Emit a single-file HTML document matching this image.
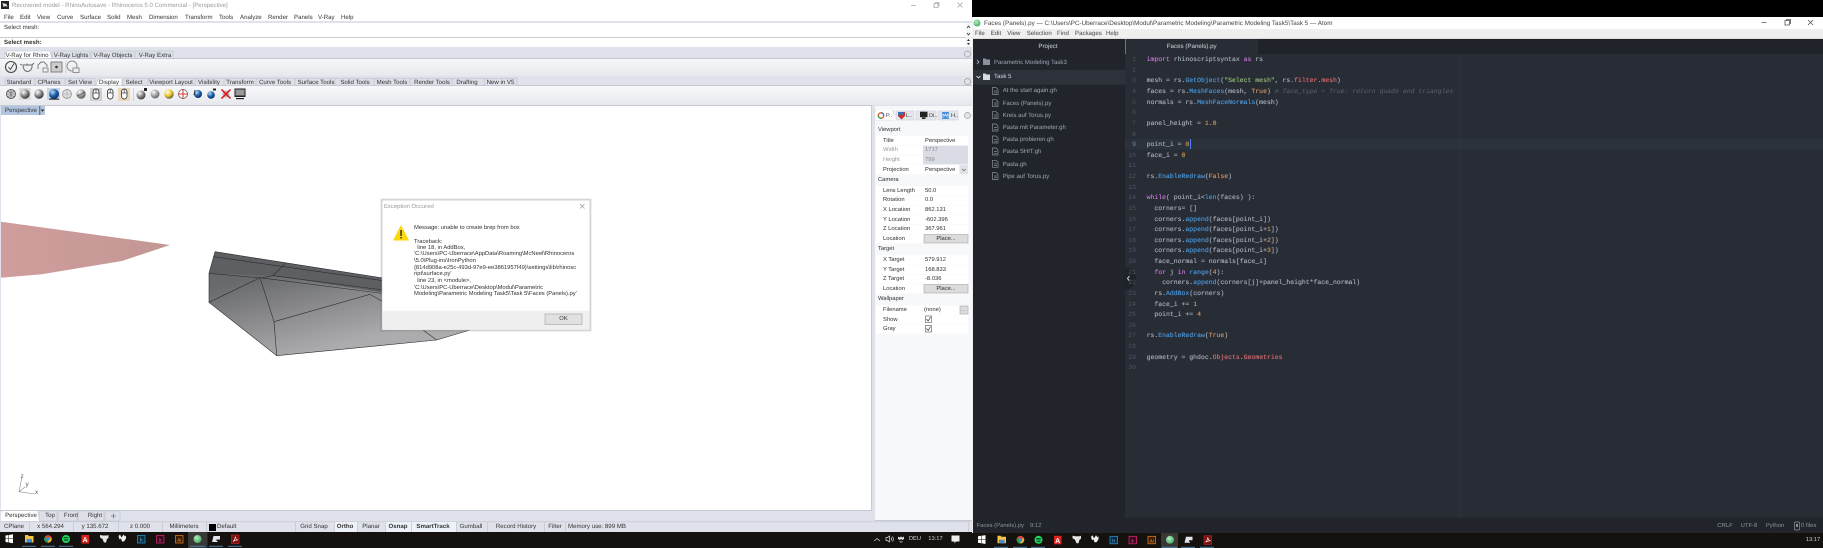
<!DOCTYPE html>
<html><head><meta charset="utf-8"><title>Rhino and Atom</title>
<style>
html,body{margin:0;padding:0;background:#000}
#r{position:relative;width:1823px;height:548px;overflow:hidden;filter:blur(.3px);font-family:"Liberation Sans",sans-serif;text-rendering:geometricPrecision;color:#333}
svg{position:absolute;left:0;top:0}
.t{position:absolute;white-space:nowrap;font-size:6.1px;line-height:8px;height:8px}
.c{transform:translateX(-50%)}
.b{font-weight:bold}
.w{color:#cfd3da}
.s{color:#9da5b4;font-size:6.05px}
.st{color:#8a919e;font-size:5.9px}
pre{position:absolute;margin:0;font-family:"Liberation Mono",monospace;font-size:6.47px;line-height:10.63px;color:#abb2bf;-webkit-text-stroke:.12px}
#ln{left:1122px;width:14px;text-align:right;top:55.2px;color:#4b5263;-webkit-text-stroke:0}
#code{left:1146.6px;top:55.2px}
.k{color:#c678dd}.f{color:#4a9ee6}.g{color:#98c379}.o{color:#d19a66}.e{color:#e06c75}.m{color:#5c6370;font-style:italic;-webkit-text-stroke:0}
</style></head><body><div id="r">
<svg width="1823" height="548" viewBox="0 0 1823 548" xmlns="http://www.w3.org/2000/svg">
<defs>
<linearGradient id="tb" x1="0" y1="0" x2="0" y2="1"><stop offset="0" stop-color="#f7f8fa"/><stop offset="1" stop-color="#e6e8ed"/></linearGradient>
<linearGradient id="pk" x1="0" y1="0" x2="1" y2="0"><stop offset="0" stop-color="#d09d9c"/><stop offset="1" stop-color="#c29794"/></linearGradient>
<linearGradient id="gr" gradientUnits="userSpaceOnUse" x1="280" y1="270" x2="300" y2="355"><stop offset="0" stop-color="#68696c"/><stop offset="1" stop-color="#acacae"/></linearGradient>
<radialGradient id="sp" cx=".35" cy=".3" r=".8"><stop offset="0" stop-color="#fff"/><stop offset=".5" stop-color="#888"/><stop offset="1" stop-color="#222"/></radialGradient>
<radialGradient id="sb" cx=".35" cy=".3" r=".8"><stop offset="0" stop-color="#bde"/><stop offset=".5" stop-color="#1d60b0"/><stop offset="1" stop-color="#062050"/></radialGradient>
<radialGradient id="sy" cx=".35" cy=".3" r=".8"><stop offset="0" stop-color="#fff"/><stop offset=".5" stop-color="#f3c92a"/><stop offset="1" stop-color="#444"/></radialGradient>
<radialGradient id="sg" cx=".4" cy=".35" r=".7"><stop offset="0" stop-color="#b5ecc0"/><stop offset="1" stop-color="#3fa85f"/></radialGradient>
</defs>

<!-- Rhino window -->
<rect x="0" y="0" width="972" height="548" fill="#fff"/>
<rect x="0" y="21" width="972" height="2" fill="#dfe2ea"/>
<rect x="3" y="23" width="963" height="14" fill="#fff"/>
<rect x="0" y="37" width="972" height="1" fill="#c9ccd4"/>
<rect x="0" y="47" width="972" height="11" fill="#dfe2ea"/>
<rect x="0" y="58" width="972" height="18" fill="url(#tb)"/>
<rect x="0" y="58" width="972" height="1" fill="#c4c8d2"/>
<rect x="0" y="76" width="972" height="10" fill="#dfe2ea"/>
<rect x="0" y="85" width="972" height="1" fill="#c4c8d2"/>
<rect x="0" y="86" width="972" height="19" fill="url(#tb)"/>
<rect x="0" y="105" width="972" height="427" fill="#dfe2ea"/>
<rect x="1" y="106" width="870" height="404" fill="#fff"/>
<rect x="871" y="106" width="1" height="405" fill="#c6cad3"/>
<rect x="0" y="510" width="872" height="1" fill="#c6cad3"/>
<rect x="0" y="105" width="872" height="1" fill="#c6cad3"/>
<rect x="875" y="106" width="97" height="414" fill="#f7f8fa"/>
<rect x="875" y="520" width="97" height="1" fill="#c6cad3"/>
<rect x="966" y="23" width="5" height="24" fill="#f4f5f7"/>
<path d="M967 28l1.5-2 1.5 2M967 33l1.5 2 1.5-2" fill="none" stroke="#333" stroke-width=".7"/>
<path d="M967 41l1.5-2 1.5 2zM967 43l1.5 2 1.5-2z" fill="#333"/>

<!-- Rhino logo + window controls -->
<rect x="1" y="1" width="8" height="8" fill="#222"/><path d="M2.500 3l4 1 1 3-2-1-2 1z" fill="#ddd"/>
<g fill="none" stroke="#aaa" stroke-width=".8">
<path d="M911 5.500h5M934 3.500h4v4h-4zM935.500 3.500v-1h3.500v3.500h-1"/><path d="M957.500 2.500l5 5M962.500 2.500l-5 5"/>
</g>

<!-- tabs row 1 -->
<g fill="#dde0e8" stroke="#bcc0ca" stroke-width=".6">
<path d="M52 58.500v-6l2-1.500h36v7.500zM91 58.500v-6l2-1.500h42v7.500zM135 58.500v-6l2-1.500h36v7.500z"/>
<path d="M5 58.500v-6l2-1.500h43l2 7.500z" fill="#fff"/>
</g>
<!-- tabs row 2 -->
<g fill="#dde0e8" stroke="#bcc0ca" stroke-width=".6">
<path d="M5 85.700v-6l2-1.500h28v7.500zM35 85.700v-6l2-1.500h28v7.500zM65 85.700v-6l2-1.500h28v7.500zM123 85.700v-6l2-1.500h23v7.500zM148 85.700v-6l2-1.500h45v7.500zM195 85.700v-6l2-1.500h27v7.500zM224 85.700v-6l2-1.500h30v7.500zM256 85.700v-6l2-1.500h37v7.500zM295 85.700v-6l2-1.500h38v7.500zM335 85.700v-6l2-1.500h37v7.500zM374 85.700v-6l2-1.500h34v7.500zM410 85.700v-6l2-1.500h40v7.500zM452 85.700v-6l2-1.500h30v7.500zM484 85.700v-6l2-1.500h31v7.500z"/>
<path d="M96 85.700l2-6 2-1.500h22v7.500z" fill="#fff"/>
</g>
<!-- gear icons -->
<g fill="#e2e4e9" stroke="#9a9da5" stroke-width=".7"><circle cx="967.500" cy="54" r="3"/><circle cx="967.500" cy="81.500" r="3"/><circle cx="967.500" cy="115.500" r="3"/></g>

<!-- toolbar row 1 icons -->
<g fill="none" stroke="#444" stroke-width=".9">
<circle cx="11" cy="67" r="5.500" stroke-width="1.100"/><path d="M8.500 67l2 2.500 3.500-6"/>
<path d="M23 65h9c.5 4-2 6.500-4.500 6.500S23 69 23 65zM22 65l-2-1M32 65l2-2M27 63.500v1.500" stroke="#666"/>
<path d="M38 69v-4l3-3h3l3 3v2" stroke="#777"/><rect x="43" y="68" width="5" height="4" fill="#eee" stroke="#888"/>
<rect x="51" y="62" width="11" height="10" fill="#ccc" stroke="#777"/><circle cx="56.500" cy="67" r="1.300" fill="#333" stroke="none"/>
<circle cx="72" cy="66" r="5" stroke="#888"/><rect x="73" y="68" width="6" height="4.500" fill="#eee" stroke="#888"/>
</g>
<rect x="65.500" y="60" width=".7" height="13" fill="#c4c8d2"/>

<!-- toolbar row 2 icons -->
<rect x="19" y="88" width="12" height="12" fill="#dcdcdc"/><rect x="47" y="88" width="13" height="12" fill="#c9d5e5"/><rect x="90" y="88" width="12" height="13" fill="#cfcfcf"/><rect x="118" y="88" width="12" height="13" fill="#ead8bd"/>
<circle cx="11" cy="94" r="4.500" fill="#ddd" stroke="#444" stroke-width=".8"/><path d="M6.500 94h9M11 89.500v9M7.500 91.500q3.500 1.500 7 0M7.500 96.500q3.500-1.500 7 0" fill="none" stroke="#444" stroke-width=".6"/>
<circle cx="25" cy="94" r="4.700" fill="url(#sp)"/><circle cx="39" cy="94" r="4.700" fill="url(#sp)"/>
<circle cx="54" cy="94" r="5" fill="url(#sb)"/><rect x="49" y="98.500" width="10" height="1.200" fill="#333"/>
<circle cx="67" cy="94" r="4.500" fill="#ddd" stroke="#888" stroke-width=".7"/><path d="M62.500 94h9M67 89.500v9" stroke="#aaa" stroke-width=".6"/>
<circle cx="81" cy="94" r="4.700" fill="url(#sp)" opacity=".8"/><path d="M77 96l8-4" stroke="#333" stroke-width=".6"/>
<g fill="#fff" stroke="#444" stroke-width=".9"><rect x="93" y="89" width="6" height="10" rx="3"/><rect x="107.500" y="89" width="5.500" height="10" rx="2.700"/><rect x="121.500" y="89" width="5.500" height="10" rx="2.700"/></g>
<g stroke="#444" stroke-width=".7"><path d="M93 93h6M96 89v4M107.500 93h5.500M110.200 89v4M121.500 93h5.500M124.200 89v4"/></g>
<rect x="133" y="88" width=".7" height="13" fill="#c4c8d2"/>
<circle cx="141" cy="95" r="4.500" fill="url(#sp)"/><rect x="144" y="88" width="3" height="3" fill="#222"/>
<circle cx="155" cy="94" r="4.500" fill="url(#sp)" opacity=".75"/>
<circle cx="169" cy="94" r="4.700" fill="url(#sy)"/>
<circle cx="183" cy="94" r="4.500" fill="#fff" stroke="#555" stroke-width=".7"/><path d="M178 94h10M183 89v10" stroke="#d33" stroke-width="1"/>
<circle cx="198" cy="94" r="4" fill="url(#sb)"/><path d="M195 90l-1 5" stroke="#333"/>
<circle cx="211" cy="95" r="3.800" fill="url(#sb)"/><rect x="213" y="88.500" width="3" height="2" fill="#222"/>
<circle cx="226" cy="94" r="3.500" fill="#bbb"/><path d="M221.500 89.500l9 9M230.500 89.500l-9 9" stroke="#d11" stroke-width="1.500"/>
<rect x="234.500" y="88.500" width="11" height="8.500" fill="#222"/><rect x="235.500" y="89.500" width="9" height="6" fill="#999"/><rect x="236" y="98" width="8" height="1.200" fill="#222"/>

<!-- viewport label -->
<rect x="1" y="106" width="44" height="9" fill="#b2c5e0"/>
<rect x="39.500" y="106" width=".7" height="9" fill="#333"/><path d="M40.800 109.500h3.500l-1.750 2.200z" fill="#222"/>

<!-- 3D model -->
<path d="M1 221.700L170 245 122 261 41.700 274.300 1 277.700z" fill="url(#pk)"/>
<path d="M215 251.700L209 273.300V302.300L276.700 355.700 436.700 340 470 330V285L383 278z" fill="url(#gr)"/>
<path d="M215 251.700L209 273.300 273 275.700 383 292.500V278z" fill="#5d5f63"/>
<g fill="none" stroke="#2c2d30" stroke-width=".6">
<path d="M215 251.700L209 273.300V302.300L276.700 355.700 436.700 340 470 330"/>
<path d="M215 251.700L383 278M213.300 256.700L383 280.700M209 273.300L260 278 273 275.700 286 262.500"/>
<path d="M209 302.300L260 277.700M260 277.700L274 321.700 276.700 355.700M274 321.700L370 294.300 383 301.700M260 277.700L383 293.500M273 275.700L383 290M423 330L436.700 340"/>
</g>

<!-- axes -->
<path d="M21.700 478L19 491.700 35 494M19 491.700L25 487" fill="none" stroke="#888" stroke-width=".6"/>

<!-- dialog -->
<rect x="380.500" y="198.500" width="211" height="133" fill="#000" opacity=".12"/>
<rect x="382" y="200" width="208" height="130" fill="#fff" stroke="#bbb" stroke-width=".6"/>
<rect x="382.500" y="310.700" width="207" height="19" fill="#f0f0f0"/>
<path d="M580 204l4.500 4.500M584.500 204L580 208.500" stroke="#999" stroke-width=".7"/>
<path d="M401 225L409 240.500H393z" fill="#fbd70b"/><rect x="400.300" y="230" width="1.500" height="6" fill="#333"/><rect x="400.300" y="237" width="1.500" height="1.500" fill="#333"/>
<rect x="545" y="314" width="37" height="10.500" fill="#e1e1e1" stroke="#adadad" stroke-width=".7"/>

<!-- panel rows -->
<g fill="#fff">
<rect x="876" y="136" width="92" height="9"/><rect x="876" y="145.700" width="92" height="9"/><rect x="876" y="155.400" width="92" height="9"/><rect x="876" y="165" width="92" height="9"/>
<rect x="876" y="186" width="92" height="9"/><rect x="876" y="195.700" width="92" height="9"/><rect x="876" y="205.400" width="92" height="9"/><rect x="876" y="215" width="92" height="9"/><rect x="876" y="224.700" width="92" height="9"/><rect x="876" y="234.300" width="92" height="9"/>
<rect x="876" y="255.500" width="92" height="9"/><rect x="876" y="265" width="92" height="9"/><rect x="876" y="274.700" width="92" height="9"/><rect x="876" y="284.300" width="92" height="9"/>
<rect x="876" y="305.500" width="92" height="9"/><rect x="876" y="315" width="92" height="9"/><rect x="876" y="324.700" width="92" height="9"/>
</g>
<rect x="923" y="145.700" width="45" height="18.700" fill="#d9dce4"/>
<rect x="959.500" y="165" width="8.500" height="9" fill="#dfe2e6"/><path d="M962 169l1.800 1.800 1.800-1.800" fill="none" stroke="#555" stroke-width=".6"/>
<g fill="#dcdcdc" stroke="#a8a8a8" stroke-width=".6"><rect x="924" y="234.500" width="44" height="8.500"/><rect x="924" y="284.500" width="44" height="8.500"/><rect x="960" y="306" width="8" height="8"/></g>
<g fill="#fff" stroke="#555" stroke-width=".6"><rect x="925.500" y="316" width="6" height="6.500"/><rect x="925.500" y="325.500" width="6" height="6.500"/></g>
<path d="M926.500 319l1.700 2 2.300-4M926.500 328.500l1.700 2 2.300-4" fill="none" stroke="#333" stroke-width=".7"/>
<!-- panel tabs -->
<g fill="#e4e6ec" stroke="#c6cad3" stroke-width=".5"><path d="M894 120v-9h-19v9zM914 120v-9h-18v9zM936 120v-9h-20v9zM958 120v-9h-20v9z"/></g>
<path d="M875 120v-8l2-1.500h15l4 9.500z" fill="#fff"/>
<circle cx="881" cy="115.500" r="2.700" fill="none" stroke="#e25822" stroke-width="1.400"/><path d="M881 112.800a2.700 2.700 0 0 1 2.700 2.700" fill="none" stroke="#3b78d8" stroke-width="1.400"/><path d="M881 118.200a2.700 2.700 0 0 1-2.700-2.700" fill="none" stroke="#3aa655" stroke-width="1.400"/>
<path d="M898 112h7v4l-3.500 3.500L898 116z" fill="#c9302c"/><path d="M898 112h5v3h-5z" fill="#3b6fb6"/>
<rect x="920" y="111.700" width="7.500" height="5.500" fill="#222"/><rect x="922" y="117.500" width="3.500" height="1.500" fill="#222"/>
<rect x="942" y="112" width="7" height="7" fill="#4a90d9"/><path d="M943 118v-4l1.500 2 1-2 1 2 1.500-2v4" stroke="#fff" stroke-width=".6" fill="none"/>

<!-- bottom tabs -->
<g fill="#dde0e8" stroke="#bcc0ca" stroke-width=".6"><path d="M39 521v-8l2-2h16v10zM58 521v-8l2-2h17v10zM78 521v-8l2-2h24v10zM105 521v-8l2-2h13v10z"/></g>
<path d="M1 521v-8l2-2h34l2 10z" fill="#fff"/>
<path d="M111 516h5M113.500 513.500v5" stroke="#777" stroke-width=".8"/>

<!-- status bar -->
<rect x="0" y="521.500" width="970" height="10.500" fill="#dfe2ea"/>
<rect x="0" y="521.500" width="970" height=".6" fill="#c0c4ce"/>
<rect x="334" y="522" width="23" height="10" fill="#eef3fa"/><rect x="385" y="522" width="71" height="10" fill="#eef3fa"/>
<g fill="#c0c4ce"><rect x="29" y="522" width=".7" height="10"/><rect x="73" y="522" width=".7" height="10"/><rect x="118" y="522" width=".7" height="10"/><rect x="162" y="522" width=".7" height="10"/><rect x="206" y="522" width=".7" height="10"/><rect x="295" y="522" width=".7" height="10"/><rect x="334" y="522" width=".7" height="10"/><rect x="357" y="522" width=".7" height="10"/><rect x="385" y="522" width=".7" height="10"/><rect x="411" y="522" width=".7" height="10"/><rect x="456" y="522" width=".7" height="10"/><rect x="487" y="522" width=".7" height="10"/><rect x="544" y="522" width=".7" height="10"/><rect x="565" y="522" width=".7" height="10"/><rect x="968" y="522" width=".7" height="10"/></g>
<rect x="209" y="524" width="7" height="7" fill="#000"/>

<!-- Left taskbar -->
<rect x="0" y="532" width="972" height="16" fill="#15110e"/>
<rect x="188" y="532" width="19.500" height="16" fill="#3a3836"/>

<!-- Atom -->
<rect x="972" y="0" width="851" height="17" fill="#000"/>
<rect x="972" y="17" width="851" height="12" fill="#fff"/>
<rect x="972" y="29" width="851" height="9.500" fill="#efefef"/>
<rect x="972" y="38.500" width="851" height=".7" fill="#ccc"/>
<rect x="973" y="39" width="850" height="479" fill="#282c34"/>
<rect x="973" y="39" width="850" height="15" fill="#1f2329"/>
<rect x="973" y="39" width="152" height="479" fill="#21252b"/>
<rect x="1125" y="39" width="133" height="15" fill="#282c34"/>
<rect x="1125" y="39" width=".9" height="15" fill="#4f84d6"/>
<rect x="973" y="70" width="152" height="14.700" fill="#2c313a"/>
<rect x="1125" y="138.700" width="698" height="11" fill="#2c323c"/>
<rect x="1459" y="54" width=".7" height="464" fill="#30353e"/>
<rect x="1190" y="139" width=".9" height="10" fill="#528bff"/>
<rect x="973" y="517.500" width="850" height="15.500" fill="#21252b"/>
<rect x="972" y="533" width="851" height="15" fill="#15110e"/>
<rect x="1161" y="533" width="17" height="15" fill="#3a3836"/>
<rect x="972" y="17" width="1" height="516" fill="#eee"/>
<circle cx="977" cy="23" r="3.500" fill="url(#sg)"/>
<g fill="none" stroke="#555" stroke-width=".8"><path d="M1761.500 22.500h5M1785 20.500h4.500v4.500H1785zM1786.500 20.500v-1h4v4h-1"/><path d="M1808 20l5 5M1813 20l-5 5"/></g>

<!-- tree icons -->
<path d="M977 60l2 2-2 2" fill="none" stroke="#9da5b4" stroke-width=".9"/>
<path d="M976.500 76l2 2 2-2" fill="none" stroke="#d7dae0" stroke-width=".9"/>
<path d="M983 58.500h2.500l1 1h3.500v5.500h-7z" fill="#8a909c"/><path d="M983 73.500h2.500l1 1h3.500v5.500h-7z" fill="#d7dae0"/>
<g fill="none" stroke="#8a909c" stroke-width=".7">
<path d="M992.500 87.500h3.500l2 2v5h-5.500zM994 91h3M994 92.800h3"/>
<path d="M992.500 99.700h3.500l2 2v5h-5.500zM994 103h3M994 105h3"/>
<path d="M992.500 111.700h3.500l2 2v5h-5.500zM994 115h3M994 117h3"/>
<path d="M992.500 124h3.500l2 2v5h-5.500zM994 127.500h3M994 129.300h3"/>
<path d="M992.500 136h3.500l2 2v5h-5.500zM994 139.500h3M994 141.300h3"/>
<path d="M992.500 148h3.500l2 2v5h-5.500zM994 151.500h3M994 153.300h3"/>
<path d="M992.500 160.300h3.500l2 2v5h-5.500zM994 163.800h3M994 165.500h3"/>
<path d="M992.500 172.500h3.500l2 2v5h-5.500zM994 176h3M994 177.800h3"/>
</g>
<!-- resize handle -->
<path d="M1124 267a12 11.500 0 0 1 0 23z" fill="#1f2329"/>
<path d="M1129.500 276l-2 2.500 2 2.500" fill="none" stroke="#d7dae0" stroke-width="1"/>

<!-- Taskbar icons, left -->
<g>
<path d="M5.500 535.500l3-.5v3.500h-3zM9 535l4-.7v4.200H9zM5.500 539h3v3.500l-3-.5zM9 539h4v4.200l-4-.7z" fill="#fff"/>
<path d="M25 535h3l1 1h4.500v6.500H25z" fill="#f6c244"/><rect x="26.500" y="539" width="5.500" height="3.500" fill="#3f8fd8"/>
<circle cx="48" cy="539" r="3.800" fill="#e8b52f"/><path d="M48 535.200a3.800 3.800 0 0 1 3.300 1.900L48 539l-3.300-1.900a3.800 3.800 0 0 1 3.300-1.900z" fill="#db4437"/><path d="M44.700 537.100L48 539v3.800a3.800 3.800 0 0 1-3.300-5.700z" fill="#1e9e55"/><circle cx="48" cy="539" r="1.600" fill="#3f88e8"/>
<circle cx="66" cy="539" r="4" fill="#1ed760"/><path d="M63.500 537.800q2.500-.8 5 .3M63.800 539.300q2.300-.6 4.400.3M64.200 540.700q2-.5 3.600.2" fill="none" stroke="#111" stroke-width=".6"/>
<rect x="81.500" y="535" width="7.500" height="8.500" fill="#d8261f"/><text x="85.200" y="542" text-anchor="middle" font-family="Liberation Sans" font-size="7" font-weight="bold" fill="#fff">A</text>
<path d="M100 535l3 .5 4 0 1.500-.5v3l-1.500 1-1 3.500h-2l-1.500-3.500-2.500-1.500z" fill="#e5e5e5"/>
<path d="M118.500 536l1.500-1.500 1.500 3 2-3 1.500 2 1-1v3l-2 3h-2l-1-3-1.500 1z" fill="#eee"/>
<rect x="137.500" y="535.500" width="7.500" height="7.500" fill="#0c2a3d" stroke="#2c9ce0" stroke-width=".7"/><text x="141.200" y="541.500" text-anchor="middle" font-family="Liberation Sans" font-size="5" fill="#5cc0f5">h</text>
<rect x="156.500" y="535.500" width="7.500" height="7.500" fill="#3a0a22" stroke="#e4256a" stroke-width=".7"/><text x="160.200" y="541.500" text-anchor="middle" font-family="Liberation Sans" font-size="4.500" fill="#f0559a">lr</text>
<rect x="175.500" y="535.500" width="7.500" height="7.500" fill="#3a1c04" stroke="#e8871e" stroke-width=".7"/><text x="179.200" y="541.500" text-anchor="middle" font-family="Liberation Sans" font-size="4.500" fill="#f0a040">Ai</text>
<circle cx="197.500" cy="539" r="4" fill="url(#sg)"/>
<path d="M212.500 540l1-4h6.500v3.500h-3.500v1.500h1v1h-5.500z" fill="#dfe3ea"/>
<rect x="231.500" y="535" width="7.500" height="8.500" fill="#7a0f0f" stroke="#d33" stroke-width=".5"/><path d="M233 541.500q2-2 2.300-5 .5 3 2.700 3.500-3-.2-5 1.500z" fill="none" stroke="#fff" stroke-width=".6"/>
</g>
<g fill="#4c7da3">
<rect x="22" y="545.800" width="14" height="1"/><rect x="41" y="545.800" width="14" height="1"/><rect x="59" y="545.800" width="14" height="1"/><rect x="190" y="545.800" width="15" height="1"/><rect x="209" y="545.800" width="14" height="1"/><rect x="228" y="545.800" width="14" height="1"/>
</g>
<!-- Taskbar icons, right -->
<g transform="translate(972.500 0.800)">
<path d="M5.500 535.500l3-.5v3.500h-3zM9 535l4-.7v4.200H9zM5.500 539h3v3.500l-3-.5zM9 539h4v4.200l-4-.7z" fill="#fff"/>
<path d="M25 535h3l1 1h4.500v6.500H25z" fill="#f6c244"/><rect x="26.500" y="539" width="5.500" height="3.500" fill="#3f8fd8"/>
<circle cx="48" cy="539" r="3.800" fill="#e8b52f"/><path d="M48 535.200a3.800 3.800 0 0 1 3.300 1.900L48 539l-3.300-1.900a3.800 3.800 0 0 1 3.300-1.900z" fill="#db4437"/><path d="M44.700 537.100L48 539v3.800a3.800 3.800 0 0 1-3.300-5.700z" fill="#1e9e55"/><circle cx="48" cy="539" r="1.600" fill="#3f88e8"/>
<circle cx="66" cy="539" r="4" fill="#1ed760"/><path d="M63.500 537.800q2.500-.8 5 .3M63.800 539.300q2.300-.6 4.400.3M64.200 540.700q2-.5 3.600.2" fill="none" stroke="#111" stroke-width=".6"/>
<rect x="81.500" y="535" width="7.500" height="8.500" fill="#d8261f"/><text x="85.200" y="542" text-anchor="middle" font-family="Liberation Sans" font-size="7" font-weight="bold" fill="#fff">A</text>
<path d="M100 535l3 .5 4 0 1.500-.5v3l-1.500 1-1 3.500h-2l-1.500-3.500-2.500-1.500z" fill="#e5e5e5"/>
<path d="M118.500 536l1.500-1.500 1.500 3 2-3 1.500 2 1-1v3l-2 3h-2l-1-3-1.500 1z" fill="#eee"/>
<rect x="137.500" y="535.500" width="7.500" height="7.500" fill="#0c2a3d" stroke="#2c9ce0" stroke-width=".7"/><text x="141.200" y="541.500" text-anchor="middle" font-family="Liberation Sans" font-size="5" fill="#5cc0f5">h</text>
<rect x="156.500" y="535.500" width="7.500" height="7.500" fill="#3a0a22" stroke="#e4256a" stroke-width=".7"/><text x="160.200" y="541.500" text-anchor="middle" font-family="Liberation Sans" font-size="4.500" fill="#f0559a">lr</text>
<rect x="175.500" y="535.500" width="7.500" height="7.500" fill="#3a1c04" stroke="#e8871e" stroke-width=".7"/><text x="179.200" y="541.500" text-anchor="middle" font-family="Liberation Sans" font-size="4.500" fill="#f0a040">Ai</text>
<circle cx="197.500" cy="539" r="4" fill="url(#sg)"/>
<path d="M212.500 540l1-4h6.500v3.500h-3.500v1.500h1v1h-5.500z" fill="#dfe3ea"/>
<rect x="231.500" y="535" width="7.500" height="8.500" fill="#7a0f0f" stroke="#d33" stroke-width=".5"/><path d="M233 541.500q2-2 2.300-5 .5 3 2.700 3.500-3-.2-5 1.500z" fill="none" stroke="#fff" stroke-width=".6"/>
</g>
<g fill="#4c7da3">
<rect x="994" y="546.800" width="14" height="1"/><rect x="1013" y="546.800" width="14" height="1"/><rect x="1031" y="546.800" width="14" height="1"/><rect x="1162" y="546.800" width="15" height="1"/><rect x="1181" y="546.800" width="14" height="1"/><rect x="1200" y="546.800" width="14" height="1"/>
</g>
<!-- tray -->
<g fill="none" stroke="#ccc" stroke-width=".8"><path d="M874 541l3-2.500 3 2.500"/><path d="M886 537.500h1.500l2-1.500v6l-2-1.500H886zM891 537.500q1 1.500 0 3M892.500 536.500q1.700 2.500 0 5"/></g>
<path d="M898 536.500l1.700 1 1.300-1 1.300 1 1.700-1v2.500l-1.700 1-1.300-1-1.300 1-1.700-1zM899.500 541l1.500.9 1.500-.9v.8l-1.500.9-1.500-.9z" fill="#ddd"/>
<path d="M951.500 535.500h8v6h-3.500l-1.500 2v-2h-3z" fill="#eee"/>
<rect x="1794.500" y="522" width="5" height="8" rx="1" fill="none" stroke="#8a919e" stroke-width=".7"/><rect x="1796" y="524" width="2" height="3" fill="#8a919e"/>
</svg>

<!-- Rhino text -->
<div class="t" style="left:12px;top:2px;color:#999">Recovered model - RhinoAutosave - Rhinoceros 5.0 Commercial - [Perspective]</div>
<div class="t" style="left:4px;top:14px">File</div><div class="t" style="left:20px;top:14px">Edit</div><div class="t" style="left:37px;top:14px">View</div><div class="t" style="left:57px;top:14px">Curve</div><div class="t" style="left:80px;top:14px">Surface</div><div class="t" style="left:107px;top:14px">Solid</div><div class="t" style="left:127px;top:14px">Mesh</div><div class="t" style="left:149px;top:14px">Dimension</div><div class="t" style="left:185px;top:14px">Transform</div><div class="t" style="left:219px;top:14px">Tools</div><div class="t" style="left:240px;top:14px">Analyze</div><div class="t" style="left:268px;top:14px">Render</div><div class="t" style="left:294px;top:14px">Panels</div><div class="t" style="left:318px;top:14px">V-Ray</div><div class="t" style="left:341px;top:14px">Help</div>
<div class="t" style="left:4px;top:24px">Select mesh:</div>
<div class="t b" style="left:4px;top:39px">Select mesh:</div>
<div class="t c" style="left:27px;top:52px">V-Ray for Rhino</div><div class="t c" style="left:71px;top:52px">V-Ray Lights</div><div class="t c" style="left:113px;top:52px">V-Ray Objects</div><div class="t c" style="left:155px;top:52px">V-Ray Extra</div>
<div class="t c" style="left:19px;top:79px">Standard</div><div class="t c" style="left:49px;top:79px">CPlanes</div><div class="t c" style="left:80px;top:79px">Set View</div><div class="t c" style="left:109px;top:79px">Display</div><div class="t c" style="left:134px;top:79px">Select</div><div class="t c" style="left:171px;top:79px">Viewport Layout</div><div class="t c" style="left:209px;top:79px">Visibility</div><div class="t c" style="left:240px;top:79px">Transform</div><div class="t c" style="left:275px;top:79px">Curve Tools</div><div class="t c" style="left:316px;top:79px">Surface Tools</div><div class="t c" style="left:355px;top:79px">Solid Tools</div><div class="t c" style="left:392px;top:79px">Mesh Tools</div><div class="t c" style="left:432px;top:79px">Render Tools</div><div class="t c" style="left:467px;top:79px">Drafting</div><div class="t c" style="left:500.500px;top:79px">New in V5</div>
<div class="t" style="left:5px;top:106.500px">Perspective</div>
<div class="t" style="left:20.500px;top:472.500px;font-size:6.500px;color:#555">z</div><div class="t" style="left:25.500px;top:480.500px;font-size:6.500px;color:#555">y</div><div class="t" style="left:35px;top:488.500px;font-size:6.500px;color:#555">x</div>

<!-- Dialog text -->
<div class="t" style="left:384px;top:202.500px;font-size:5.900px;color:#999">Exception Occured</div>
<div class="t" style="left:414px;top:224px;font-size:5.800px">Message: unable to create brep from box</div>
<div class="t" style="left:414px;top:237.500px;font-size:5.800px">Traceback:</div>
<div class="t" style="left:414px;top:243.700px;font-size:5.800px">&nbsp;&nbsp;line 18, in AddBox,</div>
<div class="t" style="left:414px;top:250.300px;font-size:5.800px">'C:\Users\PC-Uberrace\AppData\Roaming\McNeel\Rhinoceros</div>
<div class="t" style="left:414px;top:257px;font-size:5.800px">\5.0\Plug-ins\IronPython</div>
<div class="t" style="left:414px;top:263.700px;font-size:5.800px">{814d908a-e25c-493d-97e9-ee3861957f49}\settings\lib\rhinosc</div>
<div class="t" style="left:414px;top:270.300px;font-size:5.800px">ript\surface.py'</div>
<div class="t" style="left:414px;top:277px;font-size:5.800px">&nbsp;&nbsp;line 23, in &lt;module&gt;,</div>
<div class="t" style="left:414px;top:283.700px;font-size:5.800px">'C:\Users\PC-Uberrace\Desktop\Modul\Parametric</div>
<div class="t" style="left:414px;top:290.300px;font-size:5.800px">Modeling\Parametric Modeling Task5\Task 5\Faces (Panels).py'</div>
<div class="t c" style="left:563.500px;top:315px;font-size:5.800px">OK</div>

<!-- Panel text -->
<div class="t" style="left:886px;top:111.500px;font-size:5.500px">P..</div><div class="t" style="left:906px;top:111.500px;font-size:5.500px">L..</div><div class="t" style="left:929px;top:111.500px;font-size:5.500px">Di..</div><div class="t" style="left:951px;top:111.500px;font-size:5.500px">H..</div>
<div class="t" style="left:878px;top:126px;font-size:5.800px">Viewport</div>
<div class="t" style="left:883px;top:136.500px;font-size:5.800px">Title</div><div class="t" style="left:925px;top:136.500px;font-size:5.800px">Perspective</div>
<div class="t" style="left:883px;top:146px;font-size:5.800px;color:#999">Width</div><div class="t" style="left:925px;top:146px;font-size:5.800px;color:#888">1717</div>
<div class="t" style="left:883px;top:156px;font-size:5.800px;color:#999">Height</div><div class="t" style="left:925px;top:156px;font-size:5.800px;color:#888">799</div>
<div class="t" style="left:883px;top:165.500px;font-size:5.800px">Projection</div><div class="t" style="left:925px;top:165.500px;font-size:5.800px">Perspective</div>
<div class="t" style="left:878px;top:176px;font-size:5.800px">Camera</div>
<div class="t" style="left:883px;top:186.500px;font-size:5.800px">Lens Length</div><div class="t" style="left:925px;top:186.500px;font-size:5.800px">50.0</div>
<div class="t" style="left:883px;top:196px;font-size:5.800px">Rotation</div><div class="t" style="left:925px;top:196px;font-size:5.800px">0.0</div>
<div class="t" style="left:883px;top:206px;font-size:5.800px">X Location</div><div class="t" style="left:925px;top:206px;font-size:5.800px">862.131</div>
<div class="t" style="left:883px;top:215.500px;font-size:5.800px">Y Location</div><div class="t" style="left:925px;top:215.500px;font-size:5.800px">-602.396</div>
<div class="t" style="left:883px;top:225px;font-size:5.800px">Z Location</div><div class="t" style="left:925px;top:225px;font-size:5.800px">367.961</div>
<div class="t" style="left:883px;top:234.500px;font-size:5.800px">Location</div><div class="t c" style="left:946px;top:234.500px;font-size:5.800px">Place...</div>
<div class="t" style="left:878px;top:245px;font-size:5.800px">Target</div>
<div class="t" style="left:883px;top:256px;font-size:5.800px">X Target</div><div class="t" style="left:925px;top:256px;font-size:5.800px">579.912</div>
<div class="t" style="left:883px;top:265.500px;font-size:5.800px">Y Target</div><div class="t" style="left:925px;top:265.500px;font-size:5.800px">168.833</div>
<div class="t" style="left:883px;top:275px;font-size:5.800px">Z Target</div><div class="t" style="left:925px;top:275px;font-size:5.800px">-8.036</div>
<div class="t" style="left:883px;top:284.500px;font-size:5.800px">Location</div><div class="t c" style="left:946px;top:284.500px;font-size:5.800px">Place...</div>
<div class="t" style="left:878px;top:295px;font-size:5.800px">Wallpaper</div>
<div class="t" style="left:883px;top:306px;font-size:5.800px">Filename</div><div class="t" style="left:924px;top:306px;font-size:5.800px">(none)</div><div class="t" style="left:961px;top:305.500px;font-size:5.800px;color:#777">...</div>
<div class="t" style="left:883px;top:315.500px;font-size:5.800px">Show</div>
<div class="t" style="left:883px;top:325px;font-size:5.800px">Gray</div>

<!-- Bottom tabs -->
<div class="t c" style="left:21px;top:512px">Perspective</div><div class="t c" style="left:50px;top:512px">Top</div><div class="t c" style="left:71px;top:512px">Front</div><div class="t c" style="left:95px;top:512px">Right</div>

<!-- Status -->
<div class="t c" style="left:14px;top:523px">CPlane</div><div class="t c" style="left:50.500px;top:523px">x 564.294</div><div class="t c" style="left:95px;top:523px">y 135.672</div><div class="t c" style="left:140px;top:523px">z 0.000</div><div class="t c" style="left:184px;top:523px">Millimeters</div><div class="t" style="left:217px;top:523px">Default</div>
<div class="t c" style="left:314px;top:523px">Grid Snap</div><div class="t c b" style="left:345px;top:523px">Ortho</div><div class="t c" style="left:371px;top:523px">Planar</div><div class="t c b" style="left:398px;top:523px">Osnap</div><div class="t c b" style="left:433px;top:523px">SmartTrack</div><div class="t c" style="left:471px;top:523px">Gumball</div><div class="t c" style="left:516px;top:523px">Record History</div><div class="t c" style="left:555px;top:523px">Filter</div><div class="t" style="left:568px;top:523px">Memory use: 899 MB</div>

<!-- Tray -->
<div class="t c" style="left:915px;top:535px;color:#ccc;font-size:5.800px">DEU</div><div class="t c" style="left:935.500px;top:535px;color:#ccc;font-size:5.800px">13:17</div>

<!-- Atom text -->
<div class="t" style="left:984px;top:19.500px;font-size:6.300px;color:#444">Faces (Panels).py — C:\Users\PC-Uberrace\Desktop\Modul\Parametric Modeling\Parametric Modeling Task5\Task 5 — Atom</div>
<div class="t" style="left:975px;top:30px;color:#444">File</div><div class="t" style="left:990.700px;top:30px;color:#444">Edit</div><div class="t" style="left:1007.300px;top:30px;color:#444">View</div><div class="t" style="left:1026.700px;top:30px;color:#444">Selection</div><div class="t" style="left:1057px;top:30px;color:#444">Find</div><div class="t" style="left:1075px;top:30px;color:#444">Packages</div><div class="t" style="left:1106px;top:30px;color:#444">Help</div>
<div class="t c w" style="left:1048px;top:43px;font-size:6.200px">Project</div>
<div class="t c w" style="left:1191.700px;top:43px;font-size:6.200px">Faces (Panels).py</div>
<div class="t s" style="left:994px;top:58.500px">Parametric Modeling Task3</div>
<div class="t s" style="left:994px;top:73px;color:#d7dae0">Task 5</div>
<div class="t s" style="left:1002.700px;top:87px">At the start again.gh</div>
<div class="t s" style="left:1002.700px;top:99.500px">Faces (Panels).py</div>
<div class="t s" style="left:1002.700px;top:111.500px">Kreis auf Torus.py</div>
<div class="t s" style="left:1002.700px;top:123.500px">Pasta mit Parameter.gh</div>
<div class="t s" style="left:1002.700px;top:135.500px">Pasta probieren.gh</div>
<div class="t s" style="left:1002.700px;top:148px">Pasta SHIT.gh</div>
<div class="t s" style="left:1002.700px;top:160.500px">Pasta.gh</div>
<div class="t s" style="left:1002.700px;top:172.500px">Pipe auf Torus.py</div>

<pre id="ln">1
2
3
4
5
6
7
8
<span style="color:#7a8294">9</span>
10
11
12
13
14
15
16
17
18
19
20
21
22
23
24
25
26
27
28
29
30</pre>
<pre id="code"><span class="k">import</span> rhinoscriptsyntax <span class="k">as</span> rs

mesh = rs.<span class="f">GetObject</span>(<span class="g">"Select mesh"</span>, rs.<span class="e">filter</span>.<span class="e">mesh</span>)
faces = rs.<span class="f">MeshFaces</span>(mesh, <span class="o">True</span>) <span class="m"># face_type = True: return quads and triangles</span>
normals = rs.<span class="f">MeshFaceNormals</span>(mesh)

panel_height = <span class="o">1.0</span>

point_i = <span class="o">0</span>
face_i = <span class="o">0</span>

rs.<span class="f">EnableRedraw</span>(<span class="o">False</span>)

<span class="k">while</span>( point_i&lt;<span class="f">len</span>(faces) ):
  corners= []
  corners.<span class="f">append</span>(faces[point_i])
  corners.<span class="f">append</span>(faces[point_i+<span class="o">1</span>])
  corners.<span class="f">append</span>(faces[point_i+<span class="o">2</span>])
  corners.<span class="f">append</span>(faces[point_i+<span class="o">3</span>])
  face_normal = normals[face_i]
  <span class="k">for</span> j <span class="k">in</span> <span class="f">range</span>(<span class="o">4</span>):
    corners.<span class="f">append</span>(corners[j]+panel_height*face_normal)
  rs.<span class="f">AddBox</span>(corners)
  face_i += <span class="o">1</span>
  point_i += <span class="o">4</span>

rs.<span class="f">EnableRedraw</span>(<span class="o">True</span>)

geometry = ghdoc.<span class="e">Objects</span>.<span class="e">Geometries</span>
</pre>

<div class="t st" style="left:976.500px;top:522px">Faces (Panels).py</div><div class="t st" style="left:1030px;top:522px">9:12</div>
<div class="t c st" style="left:1725px;top:522px">CRLF</div><div class="t c st" style="left:1749px;top:522px">UTF-8</div><div class="t c st" style="left:1775px;top:522px">Python</div><div class="t st" style="left:1801px;top:522px">0 files</div>
<div class="t c" style="left:1813px;top:536px;color:#ccc;font-size:5.800px">13:17</div>
</div></body></html>
